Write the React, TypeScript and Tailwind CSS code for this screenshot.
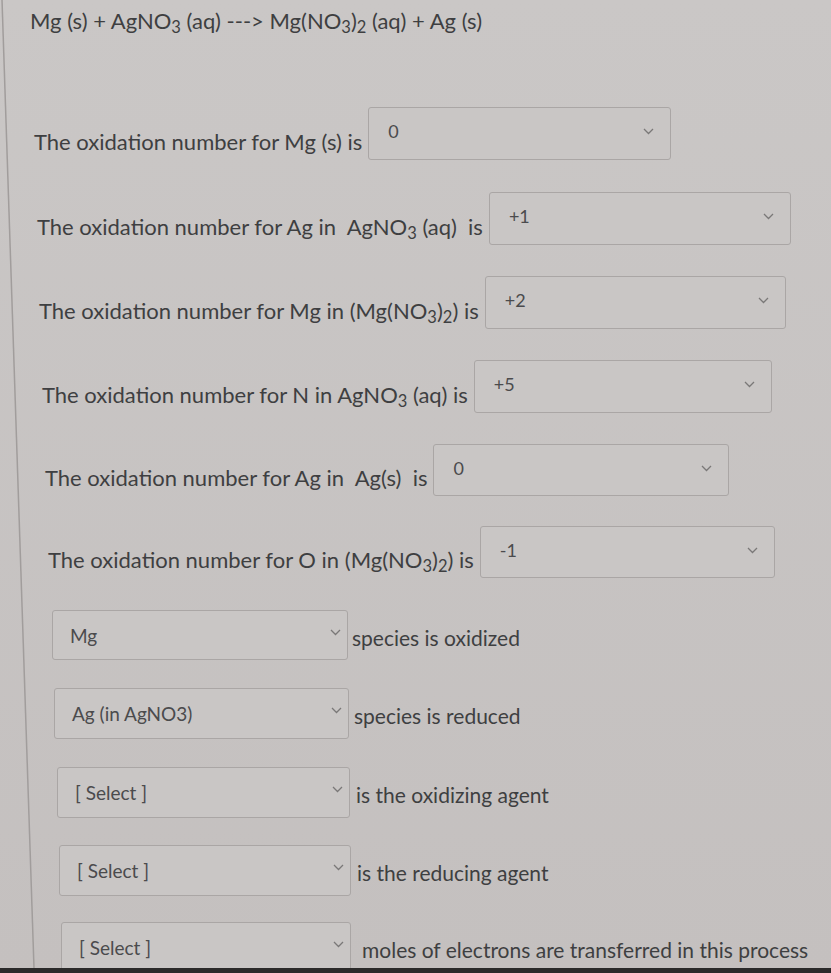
import React from 'react';

type TopRow = { label: React.ReactNode; value: string; ml: number; mt: number; w: number; h: number };
type BottomRow = { value: string; label: string; ml: number; mt: number; w: number; h: number; gap: number };

const NO3 = (
  <>
    NO<sub>3</sub>
  </>
);

const topRows: TopRow[] = [
  { label: <>The oxidation number for Mg (s) is</>, value: '0', ml: 34, mt: 74, w: 303, h: 53 },
  { label: <>The oxidation number for Ag in&nbsp; Ag{NO3} (aq)&nbsp; is</>, value: '+1', ml: 37, mt: 32, w: 302, h: 53 },
  { label: <>The oxidation number for Mg in (Mg({NO3})<sub>2</sub>) is</>, value: '+2', ml: 39, mt: 31, w: 301, h: 53 },
  { label: <>The oxidation number for N in Ag{NO3} (aq) is</>, value: '+5', ml: 42, mt: 31, w: 298, h: 53 },
  { label: <>The oxidation number for Ag in&nbsp; Ag(s)&nbsp; is</>, value: '0', ml: 45, mt: 31, w: 296, h: 52 },
  { label: <>The oxidation number for O in (Mg({NO3})<sub>2</sub>) is</>, value: '-1', ml: 48, mt: 30, w: 295, h: 52 },
];

const bottomRows: BottomRow[] = [
  { value: 'Mg', label: 'species is oxidized', ml: 52, mt: 32, w: 296, h: 50, gap: 4 },
  { value: 'Ag (in AgNO3)', label: 'species is reduced', ml: 54, mt: 28, w: 295, h: 51, gap: 5 },
  { value: '[ Select ]', label: 'is the oxidizing agent', ml: 57, mt: 28, w: 293, h: 51, gap: 6 },
  { value: '[ Select ]', label: 'is the reducing agent', ml: 59, mt: 27, w: 292, h: 51, gap: 6 },
  { value: '[ Select ]', label: 'moles of electrons are transferred in this process', ml: 61, mt: 26, w: 290, h: 50, gap: 11 },
];

function Chevron() {
  return (
    <svg width="11" height="7" viewBox="0 0 11 7" className="shrink-0">
      <polyline points="1,1 5.5,5.5 10,1" fill="none" stroke="#7a7878" strokeWidth="1.3" />
    </svg>
  );
}

export default function App() {
  return (
    <div className="w-[831px] h-[973px] overflow-hidden bg-[#2b2a2a]" style={{ fontFamily: 'Lato, "Liberation Sans", sans-serif' }}>
      <div className="relative h-[968px] overflow-hidden bg-gradient-to-b from-[#cac7c6] to-[#c4c0bf] text-[#3e3f41]">
        {/* slanted edge of the screen */}
        <svg className="absolute inset-0 pointer-events-none" width="831" height="968">
          <line x1="2" y1="0" x2="34" y2="968" stroke="#a19d9c" strokeWidth="1.5" />
        </svg>

        <div className="pt-[8px] pl-[30px] text-[22px] leading-[25px]">
          Mg (s) + Ag{NO3} (aq) ---&gt; Mg({NO3})<sub>2</sub> (aq) + Ag (s)
        </div>

        {topRows.map((r, i) => (
          <div key={i} className="flex items-end gap-[6px]" style={{ marginLeft: r.ml, marginTop: r.mt }}>
            <span className="text-[22px] leading-[26px] mb-[5px] whitespace-nowrap">{r.label}</span>
            <div
              className="flex items-center justify-between pl-[19px] pr-[16px] pb-[4px] border border-[#aaa6a5] rounded-[3px] bg-[#c9c6c5] text-[18px] text-[#4b4b4d]"
              style={{ width: r.w, height: r.h }}
            >
              <span>{r.value}</span>
              <Chevron />
            </div>
          </div>
        ))}

        {bottomRows.map((r, i) => (
          <div key={i} className="flex items-center" style={{ marginLeft: r.ml, marginTop: r.mt, gap: r.gap }}>
            <div
              className="flex items-center justify-between pl-[17px] pr-[6px] border border-[#aaa6a5] rounded-[3px] bg-[#c9c6c5] text-[19px] text-[#4b4b4d]"
              style={{ width: r.w, height: r.h }}
            >
              <span className="mt-[2px]">{r.value}</span>
              <span className="mb-[6px]">
                <Chevron />
              </span>
            </div>
            <span className="text-[21px] leading-[24px] mt-[5px] whitespace-nowrap">{r.label}</span>
          </div>
        ))}
      </div>
    </div>
  );
}
